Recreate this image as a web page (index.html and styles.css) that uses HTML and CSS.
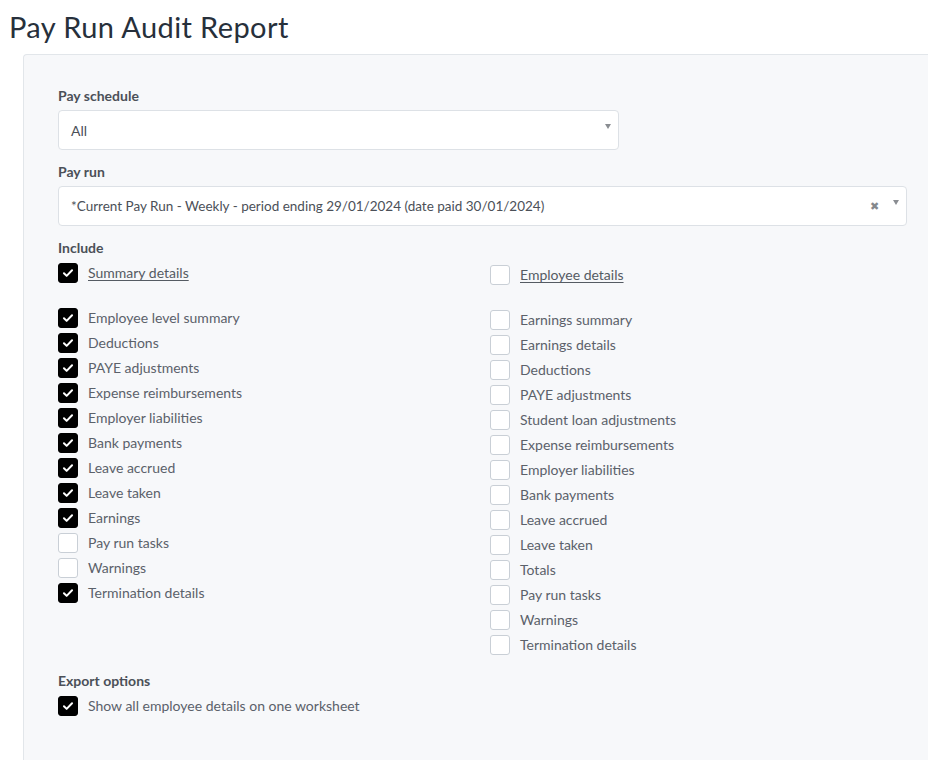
FILE: index.html
```html
<!DOCTYPE html>
<html lang="en">
<head>
    <meta charset="UTF-8">
    <title>Pay Run Audit Report</title>
    <link rel="stylesheet" href="styles.css">
</head>
<body>
    <h1 class="page-title">Pay Run Audit Report</h1>

    <div class="panel">
        <div class="field">
            <div class="field-label">Pay schedule</div>
            <div class="select select-short">
                <span class="select-value">All</span>
                <span class="select-arrow"></span>
            </div>
        </div>

        <div class="field">
            <div class="field-label">Pay run</div>
            <div class="select">
                <span class="select-value select-long">*Current Pay Run - Weekly - period ending 29/01/2024 (date paid 30/01/2024)</span>
                <span class="select-clear">&#x2716;</span>
                <span class="select-arrow"></span>
            </div>
        </div>

        <div class="field-label label-checks">Include</div>
        <div class="include-grid">
            <div class="include-col">
                <div class="check"><span class="box checked"><svg viewBox="0 0 20 20"><path d="M5.5 10.2l3 3 6-6.2"/></svg></span><a class="check-link">Summary details</a></div>
                <div class="check-list">
                    <div class="check"><span class="box checked"><svg viewBox="0 0 20 20"><path d="M5.5 10.2l3 3 6-6.2"/></svg></span>Employee level summary</div>
                    <div class="check"><span class="box checked"><svg viewBox="0 0 20 20"><path d="M5.5 10.2l3 3 6-6.2"/></svg></span>Deductions</div>
                    <div class="check"><span class="box checked"><svg viewBox="0 0 20 20"><path d="M5.5 10.2l3 3 6-6.2"/></svg></span>PAYE adjustments</div>
                    <div class="check"><span class="box checked"><svg viewBox="0 0 20 20"><path d="M5.5 10.2l3 3 6-6.2"/></svg></span>Expense reimbursements</div>
                    <div class="check"><span class="box checked"><svg viewBox="0 0 20 20"><path d="M5.5 10.2l3 3 6-6.2"/></svg></span>Employer liabilities</div>
                    <div class="check"><span class="box checked"><svg viewBox="0 0 20 20"><path d="M5.5 10.2l3 3 6-6.2"/></svg></span>Bank payments</div>
                    <div class="check"><span class="box checked"><svg viewBox="0 0 20 20"><path d="M5.5 10.2l3 3 6-6.2"/></svg></span>Leave accrued</div>
                    <div class="check"><span class="box checked"><svg viewBox="0 0 20 20"><path d="M5.5 10.2l3 3 6-6.2"/></svg></span>Leave taken</div>
                    <div class="check"><span class="box checked"><svg viewBox="0 0 20 20"><path d="M5.5 10.2l3 3 6-6.2"/></svg></span>Earnings</div>
                    <div class="check"><span class="box"></span>Pay run tasks</div>
                    <div class="check"><span class="box"></span>Warnings</div>
                    <div class="check"><span class="box checked"><svg viewBox="0 0 20 20"><path d="M5.5 10.2l3 3 6-6.2"/></svg></span>Termination details</div>
                </div>
            </div>
            <div class="include-col col-right">
                <div class="check"><span class="box"></span><a class="check-link">Employee details</a></div>
                <div class="check-list">
                    <div class="check"><span class="box"></span>Earnings summary</div>
                    <div class="check"><span class="box"></span>Earnings details</div>
                    <div class="check"><span class="box"></span>Deductions</div>
                    <div class="check"><span class="box"></span>PAYE adjustments</div>
                    <div class="check"><span class="box"></span>Student loan adjustments</div>
                    <div class="check"><span class="box"></span>Expense reimbursements</div>
                    <div class="check"><span class="box"></span>Employer liabilities</div>
                    <div class="check"><span class="box"></span>Bank payments</div>
                    <div class="check"><span class="box"></span>Leave accrued</div>
                    <div class="check"><span class="box"></span>Leave taken</div>
                    <div class="check"><span class="box"></span>Totals</div>
                    <div class="check"><span class="box"></span>Pay run tasks</div>
                    <div class="check"><span class="box"></span>Warnings</div>
                    <div class="check"><span class="box"></span>Termination details</div>
                </div>
            </div>
        </div>

        <div class="field-label label-checks label-export">Export options</div>
        <div class="check"><span class="box checked"><svg viewBox="0 0 20 20"><path d="M5.5 10.2l3 3 6-6.2"/></svg></span>Show all employee details on one worksheet</div>
    </div>
</body>
</html>
```

FILE: styles.css
```css
* {
    margin: 0;
    padding: 0;
    box-sizing: border-box;
}

body {
    font-family: 'Lato', 'Open Sans', sans-serif;
    font-size: 14px;
    color: #5b616a;
    background: #fff;
    overflow: hidden;
}

.page-title {
    font-size: 29px;
    font-weight: 400;
    color: #27303b;
    line-height: 54px;
    padding-left: 9px;
    letter-spacing: 0.4px;
}

.panel {
    margin-left: 23px;
    background: #f7f8fa;
    border: 1px solid #e2e6ea;
    border-right: none;
    border-radius: 4px 0 0 0;
    padding: 31px 21px 60px 34px;
    min-height: 720px;
}

.field {
    margin-bottom: 12px;
}

.field-label {
    font-weight: 700;
    color: #4b5058;
    line-height: 20px;
    margin-bottom: 4px;
}

.label-checks {
    margin-bottom: 5px;
}

.label-export {
    margin-top: 11px;
}

.select {
    position: relative;
    height: 40px;
    background: #fff;
    border: 1px solid #dde1e6;
    border-radius: 4px;
    display: flex;
    align-items: center;
    padding-left: 12px;
    color: #4b5058;
}

.select-short {
    width: 561px;
}

.select-long {
    font-size: 13.5px;
}

.select-arrow {
    position: absolute;
    right: 7px;
    top: 13px;
    border-left: 3px solid transparent;
    border-right: 3px solid transparent;
    border-top: 5px solid #8a8d92;
}

.select-clear {
    position: absolute;
    right: 27px;
    top: 12px;
    font-size: 11px;
    color: #85888d;
}

.include-grid {
    display: grid;
    grid-template-columns: 432px 1fr;
}

.col-right {
    padding-top: 2px;
}

.check-list {
    margin-top: 25px;
}

.check {
    display: flex;
    align-items: center;
    height: 20px;
    margin-bottom: 5px;
    line-height: 20px;
}

.box {
    width: 20px;
    height: 20px;
    flex: none;
    margin-right: 10px;
    border: 1px solid #c9cfd6;
    border-radius: 3px;
    background: #fff;
}

.box.checked {
    background: #000;
    border-color: #000;
}

.box svg {
    display: block;
    width: 18px;
    height: 18px;
    fill: none;
    stroke: #fff;
    stroke-width: 2.2;
    stroke-linecap: round;
    stroke-linejoin: round;
}

.check-link {
    color: #555b63;
    text-decoration: underline;
    text-underline-offset: 2px;
}
```
